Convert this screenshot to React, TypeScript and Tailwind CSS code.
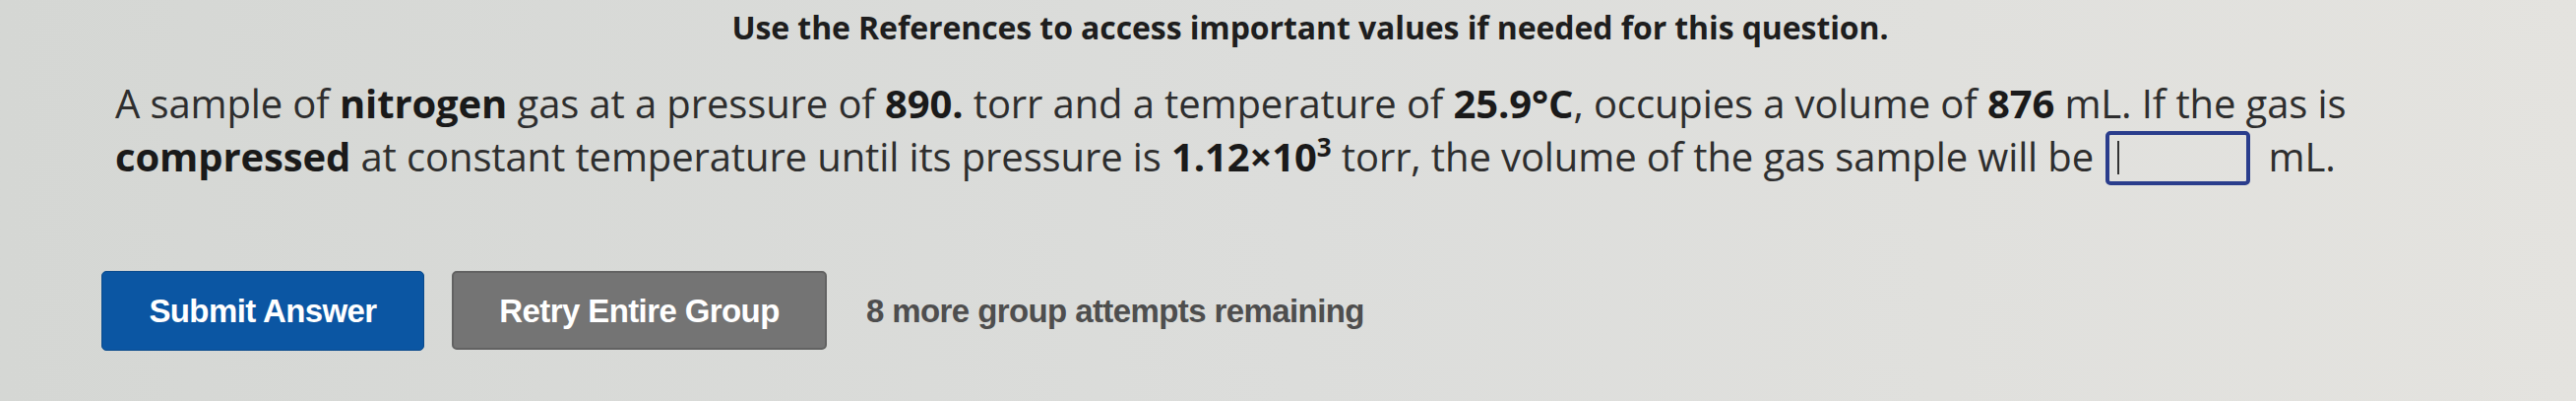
import React from "react";

const App: React.FC = () => {
  return (
    <div className="w-[2617px] h-[407px] overflow-hidden bg-linear-to-r from-[#d5d7d4] via-[#dcdddb] to-[#e4e3df]">
      <div className="pl-[117px] pr-[72px] pt-[8px]">
        <h2
          className="text-center text-[32px] leading-[40px] font-bold text-[#1e1e1e] tracking-[-0.1px]"
          style={{ fontFamily: '"Open Sans", sans-serif' }}
        >
          Use the References to access important values if needed for this question.
        </h2>

        <p
          className="mt-[30px] text-[40px] leading-[54px] text-[#2e2e2e] tracking-[-0.12px]"
          style={{ fontFamily: '"Open Sans", sans-serif' }}
        >
          A sample of <b className="font-bold text-[#1a1a1a]">nitrogen</b> gas at a pressure of{" "}
          <b className="font-bold text-[#1a1a1a]">890.</b> torr and a temperature of{" "}
          <b className="font-bold text-[#1a1a1a]">25.9°C</b>, occupies a volume of{" "}
          <b className="font-bold text-[#1a1a1a]">876</b> mL. If the gas is
          <br />
          <b className="font-bold text-[#1a1a1a]">compressed</b> at constant temperature until its pressure is{" "}
          <b className="font-bold text-[#1a1a1a]">
            1.12×10<sup className="text-[26px] relative -top-[15px]">3</sup>
          </b>{" "}
          torr, the volume of the gas sample will be{" "}
          <span className="inline-flex align-middle items-center w-[147px] h-[55px] border-[4px] border-[#2a3d8c] rounded-[5px] px-[8px] mx-[2px] -mt-[6px]">
            <span className="w-[2px] h-[34px] bg-[#333]" />
          </span>{" "}
          <span className="ml-[6px]">mL.</span>
        </p>

        <div
          className="mt-[87px] -ml-[14px] flex items-center gap-[28px]"
          style={{ fontFamily: '"Liberation Sans", Arial, sans-serif' }}
        >
          <button className="w-[328px] h-[81px] rounded-[5px] bg-[#0b56a3] border border-[#0a4a8c] text-white text-[33px] font-bold tracking-[-0.6px]">
            Submit Answer
          </button>
          <button className="w-[381px] h-[80px] rounded-[5px] bg-[#747474] border-[2px] border-[#626262] text-white text-[33px] font-bold tracking-[-0.6px]">
            Retry Entire Group
          </button>
          <span className="ml-[12px] text-[33px] font-bold text-[#4e4e4e] tracking-[-0.6px]">
            8 more group attempts remaining
          </span>
        </div>
      </div>
    </div>
  );
};

export default App;
